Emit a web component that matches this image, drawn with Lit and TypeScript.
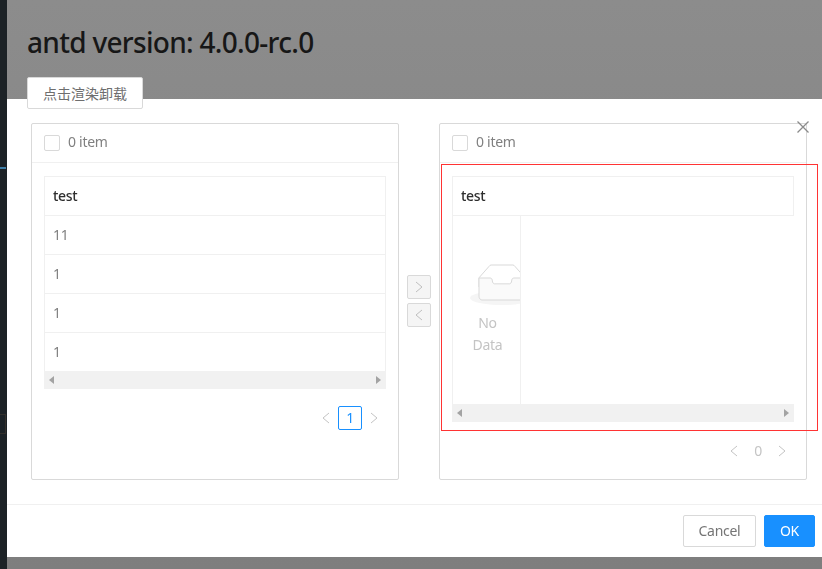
import { LitElement, html, css, svg } from "lit";
import { customElement } from "lit/decorators.js";

const chevron = (dir: "l" | "r") => html`<svg class="chev" width="10" height="12" viewBox="0 0 10 12" fill="none" stroke="currentColor" stroke-width="1">
  <path d=${dir === "l" ? "M8 1 2 6 8 11" : "M2 1 8 6 2 11"}></path></svg>`;

const arrow = (dir: "l" | "r") => html`<svg width="6" height="8" viewBox="0 0 6 8" fill="#a3a3a3">
  <path d=${dir === "l" ? "M5 0V8L0 4Z" : "M1 0V8L6 4Z"}></path></svg>`;

const empty = svg`<g transform="translate(0 1)" fill="none" fill-rule="evenodd"><ellipse fill="#f5f5f5" cx="32" cy="33" rx="32" ry="7"></ellipse><g fill-rule="nonzero" stroke="#d9d9d9"><path d="M55 12.76L44.854 1.258C44.367.474 43.656 0 42.907 0H21.093c-.749 0-1.46.474-1.947 1.257L9 12.761V22h46v-9.24z"></path><path d="M41.613 15.931c0-1.605.994-2.93 2.227-2.931H55v18.137C55 33.26 53.68 35 52.05 35h-40.1C10.32 35 9 33.259 9 31.137V13h11.16c1.233 0 2.227 1.323 2.227 2.928v.022c0 1.605 1.005 2.901 2.237 2.901h14.752c1.232 0 2.237-1.308 2.237-2.913v-.007z" fill="#fafafa"></path></g></g>`;

@customElement("app-root")
export class AppRoot extends LitElement {
  static styles = css`
    :host {
      display: block;
      position: relative;
      width: 822px;
      height: 569px;
      overflow: hidden;
      background: #1c2226;
      font-family: "Noto Sans", "Noto Sans CJK SC", sans-serif;
      font-size: 14px;
      letter-spacing: -0.02em;
      color: #6e6e6e;
    }
    .page {
      margin-left: 7px;
      height: 569px;
      box-sizing: border-box;
      padding: 21px 20px 0;
      background: linear-gradient(#8c8c8c, #7e7e7e);
    }
    h1 {
      margin: 0 0 13px;
      font-size: 28px;
      line-height: 43px;
      font-weight: 500;
      letter-spacing: -0.7px;
      color: #171717;
    }
    .render {
      position: relative;
      z-index: 2;
      display: block;
      box-sizing: border-box;
      width: 116px;
      height: 32px;
      padding: 0;
      background: #fff;
      border: 1px solid #d9d9d9;
      border-radius: 2px;
      font: inherit;
      letter-spacing: 0;
      color: #6e6e6e;
    }
    .tick {
      position: absolute;
      left: 0;
      top: 167px;
      width: 6px;
      height: 2px;
      background: #3f7fa8;
    }
    .ghost {
      position: absolute;
      left: 0;
      top: 414px;
      width: 6px;
      height: 20px;
      box-sizing: border-box;
      border: 1px solid #33302c;
      border-left: 0;
    }
    .modal {
      position: absolute;
      left: 7px;
      right: 0;
      top: 99px;
      height: 458px;
      background: #fff;
      display: flex;
      flex-direction: column;
      will-change: transform;
    }
    .close {
      position: absolute;
      left: 790px;
      top: 22px;
      width: 12px;
      height: 12px;
      color: #8a8a8a;
    }
    .body {
      height: 405px;
      box-sizing: border-box;
      padding: 24px 15px 0 24px;
      display: grid;
      grid-template-columns: 368px 40px 368px;
      grid-template-rows: 357px;
    }
    .transfer {
      border: 1px solid #d9d9d9;
      border-radius: 2px;
      box-sizing: border-box;
      display: flex;
      flex-direction: column;
    }
    .thead {
      height: 39px;
      flex: none;
      box-sizing: border-box;
      border-bottom: 1px solid #f0f0f0;
      display: flex;
      align-items: center;
      gap: 8px;
      padding: 0 12px 2px;
      color: #808080;
      line-height: 22px;
    }
    .box {
      width: 16px;
      height: 16px;
      margin-top: 2px;
      box-sizing: border-box;
      border: 1px solid #d9d9d9;
      border-radius: 2px;
      background: #fff;
    }
    .content {
      padding: 13px 12px 0;
      flex: 1;
      display: flex;
      flex-direction: column;
    }
    .table {
      width: 342px;
      box-sizing: border-box;
      border-top: 1px solid #f0f0f0;
    }
    .row {
      height: 39px;
      box-sizing: border-box;
      border-left: 1px solid #f0f0f0;
      border-right: 1px solid #f0f0f0;
      border-bottom: 1px solid #f0f0f0;
      padding: 0 8px 1px;
      display: flex;
      align-items: center;
      color: #808080;
    }
    .row.last {
      height: 38px;
      border-bottom: 0;
    }
    .row.head {
      color: #2e2e2e;
      font-weight: 500;
    }
    .emptycell {
      width: 69px;
      height: 188px;
      box-sizing: border-box;
      border-left: 1px solid #f0f0f0;
      border-right: 1px solid #f0f0f0;
      padding: 47px 15px 0 17px;
      overflow: hidden;
      text-align: center;
      color: #c4c4c4;
      line-height: 22px;
    }
    .emptycell svg {
      display: block;
      margin-top: 1px;
      margin-bottom: 7px;
    }
    .bar {
      height: 18px;
      background: #f1f1f1;
      display: flex;
      align-items: center;
      justify-content: space-between;
      padding: 0 5px;
    }
    .pager {
      display: flex;
      justify-content: flex-end;
      align-items: center;
      height: 24px;
      margin-top: 17px;
      padding-right: 7px;
      color: #c4c4c4;
    }
    .pager .chev {
      width: 10px;
    }
    .pager span {
      width: 24px;
      height: 24px;
      margin: 0 7px;
      box-sizing: border-box;
      line-height: 21px;
      text-align: center;
      border: 1px solid transparent;
      border-radius: 2px;
    }
    .pager span.on {
      border-color: #1890ff;
      color: #1890ff;
    }
    .ops {
      display: flex;
      flex-direction: column;
      align-items: center;
      justify-content: center;
      gap: 4px;
      padding-bottom: 1px;
    }
    .op {
      width: 24px;
      height: 24px;
      box-sizing: border-box;
      background: #f5f5f5;
      border: 1px solid #d9d9d9;
      border-radius: 2px;
      color: #bfbfbf;
      display: flex;
      align-items: center;
      justify-content: center;
    }
    .footer {
      border-top: 1px solid #f0f0f0;
      flex: 1;
      display: flex;
      justify-content: flex-end;
      align-items: center;
      gap: 8px;
      padding: 0 7px 0 0;
    }
    .footer button {
      height: 32px;
      box-sizing: border-box;
      font: inherit;
      letter-spacing: -0.02em;
      border-radius: 2px;
      padding: 0 0 2px;
    }
    .cancel {
      width: 73px;
      background: #fff;
      border: 1px solid #d9d9d9;
      color: #757575;
    }
    .ok {
      width: 51px;
      background: #1890ff;
      border: 1px solid #1890ff;
      color: #fff;
    }
    .redbox {
      position: absolute;
      left: 441px;
      top: 164px;
      width: 377px;
      height: 267px;
      box-sizing: border-box;
      border: 1px solid #ff3333;
      pointer-events: none;
      z-index: 3;
    }
  `;

  private head() {
    return html`<div class="thead"><div class="box"></div><div>0 item</div></div>`;
  }

  render() {
    return html`
      <div class="page">
        <h1>antd version: 4.0.0-rc.0</h1>
        <button class="render">点击渲染卸载</button>
      </div>
      <div class="tick"></div>
      <div class="ghost"></div>
      <div class="modal">
        <div class="body">
          <div class="transfer">
            ${this.head()}
            <div class="content">
              <div class="table">
                <div class="row head">test</div>
                <div class="row">11</div>
                <div class="row">1</div>
                <div class="row">1</div>
                <div class="row last">1</div>
              </div>
              <div class="bar">${arrow("l")}${arrow("r")}</div>
              <div class="pager">${chevron("l")}<span class="on">1</span>${chevron("r")}</div>
            </div>
          </div>
          <div class="ops">
            <div class="op">${chevron("r")}</div>
            <div class="op">${chevron("l")}</div>
          </div>
          <div class="transfer">
            ${this.head()}
            <div class="content">
              <div class="table">
                <div class="row head">test</div>
                <div class="emptycell">
                  <svg width="64" height="41" viewBox="0 0 64 41">${empty}</svg>
                  <div>No Data</div>
                </div>
              </div>
              <div class="bar">${arrow("l")}${arrow("r")}</div>
              <div class="pager">${chevron("l")}<span>0</span>${chevron("r")}</div>
            </div>
          </div>
        </div>
        <div class="footer">
          <button class="cancel">Cancel</button>
          <button class="ok">OK</button>
        </div>
        <svg class="close" viewBox="0 0 12 12" fill="none" stroke="currentColor" stroke-width="1.3"><path d="M.5.5l11 11M11.5.5l-11 11"></path></svg>
      </div>
      <div class="redbox"></div>
    `;
  }
}
